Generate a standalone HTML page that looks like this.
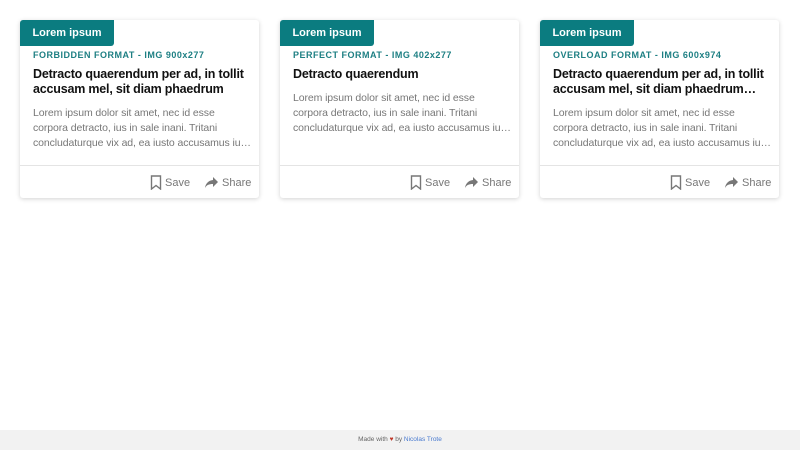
<!DOCTYPE html>
<html><head><style>
*{box-sizing:border-box;margin:0;padding:0}
body{width:800px;height:450px;background:#fff;font-family:"Liberation Sans",sans-serif;position:relative;overflow:hidden}
.card{position:absolute;top:20px;width:239px;height:178px;background:#fff;border-radius:3px;box-shadow:0 1px 5px rgba(0,0,0,.18)}
.badge{position:absolute;left:0;top:0;width:94px;height:26px;background:#0b7c80;color:#fff;font-size:11px;font-weight:bold;line-height:26px;text-align:center;border-radius:3px 0 3px 0}
.cat{position:absolute;left:13px;top:30px;font-size:9px;font-weight:bold;letter-spacing:0.5px;color:#1d7f83;white-space:nowrap}
.title{position:absolute;left:13px;top:47px;font-size:12.5px;font-weight:bold;line-height:15px;color:#111;white-space:nowrap;letter-spacing:-0.2px}
.body{position:absolute;left:13px;font-size:10.5px;line-height:15px;color:#777;white-space:nowrap;letter-spacing:-0.1px}
.div{position:absolute;left:0;right:0;top:145px;border-top:1px solid #e4e4e4}
.act{position:absolute;top:155px;height:15px;font-size:11px;color:#777;display:flex;align-items:center;gap:3px}
.footer{position:absolute;left:0;top:430px;width:800px;height:20px;background:#f2f2f2;font-size:6.5px;color:#666;text-align:center;line-height:20px}
</style></head><body>
<div class="card" style="left:20px"><div class="badge">Lorem ipsum</div><div class="cat">FORBIDDEN FORMAT - IMG 900x277</div><div class="title">Detracto quaerendum per ad, in tollit<br>accusam mel, sit diam phaedrum</div><div class="body" style="top:86px">Lorem ipsum dolor sit amet, nec id esse<br>corpora detracto, ius in sale inani. Tritani<br>concludaturque vix ad, ea iusto accusamus iu…</div><div class="div"></div>
<div class="act" style="left:130px"><svg width="12" height="15" viewBox="0 0 12 15"><path d="M1.5 1h9v13l-4.5-3.5L1.5 14z" fill="none" stroke="#777" stroke-width="1.4"/></svg>Save</div>
<div class="act" style="left:184px"><svg width="15" height="13" viewBox="0 0 15 13"><path d="M9 1l5 5-5 5V8C5 8 2.5 9 1 12c.5-4 3-7.5 8-8z" fill="#777"/></svg>Share</div></div>
<div class="card" style="left:280px"><div class="badge">Lorem ipsum</div><div class="cat">PERFECT FORMAT - IMG 402x277</div><div class="title">Detracto quaerendum</div><div class="body" style="top:71px">Lorem ipsum dolor sit amet, nec id esse<br>corpora detracto, ius in sale inani. Tritani<br>concludaturque vix ad, ea iusto accusamus iu…</div><div class="div"></div>
<div class="act" style="left:130px"><svg width="12" height="15" viewBox="0 0 12 15"><path d="M1.5 1h9v13l-4.5-3.5L1.5 14z" fill="none" stroke="#777" stroke-width="1.4"/></svg>Save</div>
<div class="act" style="left:184px"><svg width="15" height="13" viewBox="0 0 15 13"><path d="M9 1l5 5-5 5V8C5 8 2.5 9 1 12c.5-4 3-7.5 8-8z" fill="#777"/></svg>Share</div></div>
<div class="card" style="left:540px"><div class="badge">Lorem ipsum</div><div class="cat">OVERLOAD FORMAT - IMG 600x974</div><div class="title">Detracto quaerendum per ad, in tollit<br>accusam mel, sit diam phaedrum…</div><div class="body" style="top:86px">Lorem ipsum dolor sit amet, nec id esse<br>corpora detracto, ius in sale inani. Tritani<br>concludaturque vix ad, ea iusto accusamus iu…</div><div class="div"></div>
<div class="act" style="left:130px"><svg width="12" height="15" viewBox="0 0 12 15"><path d="M1.5 1h9v13l-4.5-3.5L1.5 14z" fill="none" stroke="#777" stroke-width="1.4"/></svg>Save</div>
<div class="act" style="left:184px"><svg width="15" height="13" viewBox="0 0 15 13"><path d="M9 1l5 5-5 5V8C5 8 2.5 9 1 12c.5-4 3-7.5 8-8z" fill="#777"/></svg>Share</div></div>
<div class="footer">Made with <span style="color:#c0392b">♥</span> by <span style="color:#4a7bd0">Nicolas Trote</span></div>
</body></html>
